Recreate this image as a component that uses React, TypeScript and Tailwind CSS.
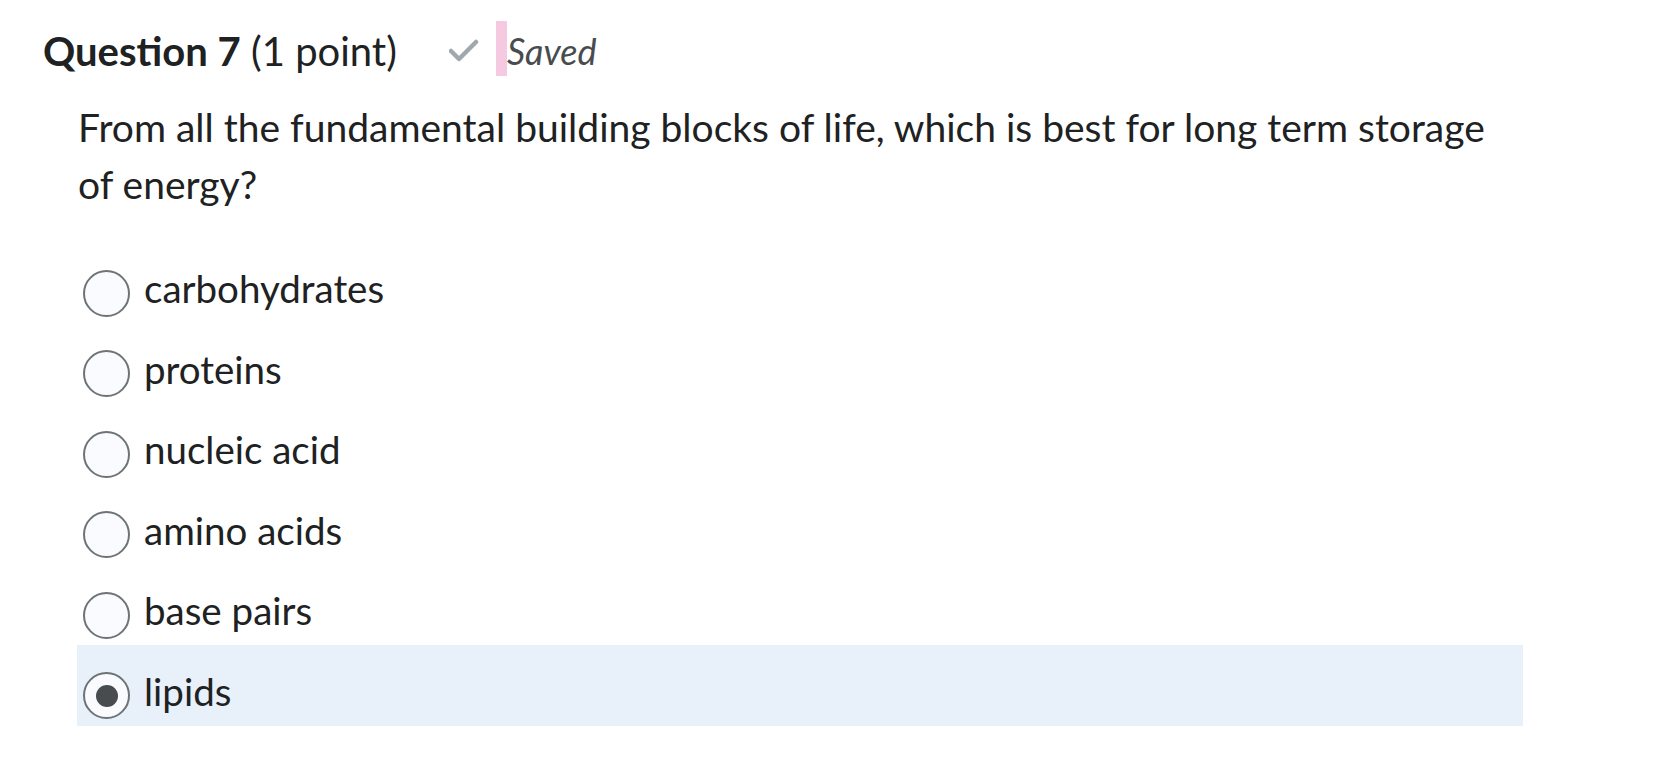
import React from 'react';

const options = ['carbohydrates', 'proteins', 'nucleic acid', 'amino acids', 'base pairs', 'lipids'];

function Radio({ checked }: { checked: boolean }) {
  return (
    <span className="flex h-[47px] w-[47px] shrink-0 items-center justify-center rounded-full border-2 border-[#6e7376] bg-[#f9fbff]">
      {checked && <span className="h-[22px] w-[22px] rounded-full bg-[#494c4e]" />}
    </span>
  );
}

export default function App() {
  const selected = 'lipids';

  return (
    <div className="h-[776px] w-full bg-white pl-[43px] pt-[27px] font-['Lato',sans-serif] text-[#202122]">
      {/* Question header */}
      <div className="flex h-[48px] items-center">
        <h2 className="text-[40px] leading-[48px]">
          <span className="font-bold">Question 7</span> (1 point)
        </h2>
        <svg className="ml-[52px] h-[24px] w-[30px]" viewBox="0 0 30 24" fill="none">
          <polyline points="2,12 10,20 27,3" stroke="#a1a8ad" strokeWidth="4.5" strokeLinecap="round" strokeLinejoin="round" />
        </svg>
        <span className="ml-[17px] -mt-[5px] h-[55px] w-[11px] bg-[#f5c9df]" />
        <span className="text-[36px] italic text-[#494c4e]">Saved</span>
      </div>

      <div className="ml-[34px] mt-[24px] w-[1446px]">
        <p className="w-[1420px] pl-[1px] text-[39px] leading-[57.4px]">
          From all the fundamental building blocks of life, which is best for long term storage of energy?
        </p>

        {/* Options */}
        <div className="mt-[28.8px] flex flex-col">
          {options.map((opt) => {
            const isSel = opt === selected;
            return (
              <label
                key={opt}
                className={`flex h-[80.5px] items-center gap-[14px] pl-[6px] pt-[21px] ${isSel ? 'bg-[#e8f0fa]' : ''}`}
              >
                <Radio checked={isSel} />
                <span className="mb-[10px] text-[38.5px] leading-[44px]">{opt}</span>
              </label>
            );
          })}
        </div>
      </div>
    </div>
  );
}
